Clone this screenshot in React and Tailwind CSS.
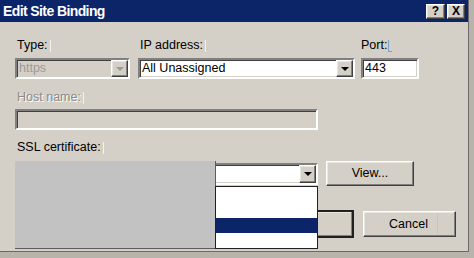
const sunken = 'border-2 border-t-[#808080] border-l-[#808080] border-b-white border-r-white shadow-[inset_1px_1px_0_#404040,inset_-1px_-1px_0_#d4d0c8]';
const raised = 'border border-t-white border-l-white border-b-[#404040] border-r-[#404040] shadow-[inset_-1px_-1px_0_#808080,inset_1px_1px_0_#e8e6e0]';

const Arrow = ({ disabled }) => (
  <div className={`w-[17px] h-full flex items-center justify-center bg-[#d4d0c8] ${raised}`}>
    <div
      className={`w-0 h-0 border-l-[4px] border-r-[4px] border-t-[4px] border-l-transparent border-r-transparent ${
        disabled ? 'border-t-[#9a9a9a]' : 'border-t-black'
      }`}
    />
  </div>
);

const Label = ({ children, muted, mark }) => (
  <div className="h-[15px] flex items-center">
    <span className={`leading-[15px] pl-[2px] ${muted ? 'text-[#8a8a8a] [text-shadow:1px_1px_0_#fff]' : 'text-black'}`}>
      {children}
    </span>
    {mark && <span className="ml-[2px] h-[12px] w-px bg-[#f4f2ee]" />}
  </div>
);

const Combo = ({ value, disabled, className }) => (
  <div className={`h-[21px] flex ${sunken} ${disabled ? 'bg-[#d4d0c8]' : 'bg-white'} ${className}`}>
    <div className={`flex-1 flex items-center pl-[2px] ${disabled ? 'text-[#9a9a9a]' : 'text-black'}`}>{value}</div>
    <Arrow disabled={disabled} />
  </div>
);

const Button = ({ children, className, isDefault }) => (
  <div
    className={`flex items-center justify-center bg-[#d4d0c8] ${
      isDefault ? 'outline-2 outline-solid outline-[#202020] -outline-offset-1' : ''
    } ${raised} ${className}`}
  >
    {children}
  </div>
);

export default function App() {
  return (
    <div
      className="w-[474px] h-[258px] bg-[#b8b4ac] overflow-hidden text-[12.5px]"
      style={{ fontFamily: '"Liberation Sans", Arial, sans-serif' }}
    >
      <div className="relative w-[469px] h-[252px] bg-[#d4d0c8] border-r border-b border-[#6a6a6a]">
        <div className="h-[22px] bg-[#0c2468] flex items-center pl-[3px] pr-[2px]">
          <span className="text-white font-bold text-[14px] tracking-[-0.6px] leading-none">Edit Site Binding</span>
          <div className="ml-auto flex gap-[2px] mr-[1px]">
            <div className={`w-[19px] h-[15px] bg-[#d4d0c8] flex items-center justify-center font-bold text-[12px] leading-none ${raised}`}>?</div>
            <div className={`w-[18px] h-[15px] bg-[#d4d0c8] flex items-center justify-center font-bold text-[12px] leading-none ${raised}`}>X</div>
          </div>
        </div>

        <div className="px-[15px] pt-[16px] flex flex-col">
          <div className="flex items-start gap-[8px]">
            <div className="w-[115px] flex flex-col gap-[5px]">
              <Label mark>Type:</Label>
              <Combo value="https" disabled />
            </div>
            <div className="w-[217px] flex flex-col gap-[5px]">
              <Label mark>IP address:</Label>
              <Combo value="All Unassigned" />
            </div>
            <div className="ml-[-2px] w-[58px] flex flex-col gap-[5px]">
              <div className="h-[15px] flex items-center">
                <span className="leading-[15px]">Port:</span>
                <span className="ml-[1px] h-[12px] w-[4px] border-l border-b border-[#7fa0c8]" />
              </div>
              <div className={`h-[21px] bg-white flex items-center pl-[2px] ${sunken}`}>443</div>
            </div>
          </div>

          <div className="mt-[11px] flex flex-col gap-[4px]">
            <Label muted mark>Host name:</Label>
            <div className={`w-[303px] h-[21px] bg-[#d4d0c8] ${sunken}`} />
          </div>

          <div className="mt-[10px] flex flex-col gap-[6px]">
            <Label mark>SSL certificate:</Label>
            <div className="flex items-center gap-[8px]">
              <Combo value="" className="w-[303px] !h-[22px]" />
              <Button className="w-[88px] h-[25px]">View...</Button>
            </div>
          </div>

          <div className="mt-[25px] flex justify-end gap-[10px] mr-[-3px]">
            <Button isDefault className="w-[93px] h-[26px]">OK</Button>
            <Button className="relative w-[93px] h-[26px]">
              <span className="mr-[2px]">Cancel</span>
              <span className="absolute right-[17px] top-[2px] bottom-[2px] w-px bg-[#b4c8d8]" />
            </Button>
          </div>
        </div>

        <div className="absolute left-[15px] top-[161px] w-[201px] h-[88px] bg-[#c2c2c2] border-r border-b border-[#5c5c5c]" />
        <div className="absolute left-[215px] top-[186px] w-[103px] h-[63px] bg-white border border-[#202020]">
          <div className="mt-[31px] h-[15px] bg-[#0c2468]" />
        </div>
      </div>
    </div>
  );
}
